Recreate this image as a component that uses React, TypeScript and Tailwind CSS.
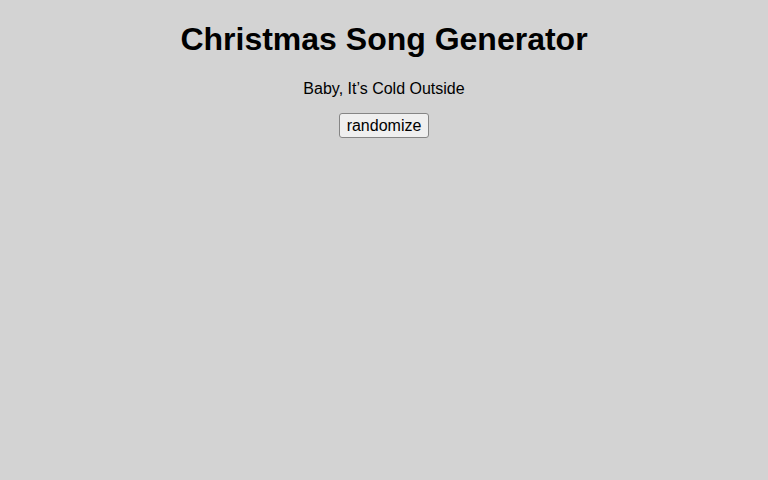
import { useState } from "react";

const SONGS = [
  "Baby, It\u2019s Cold Outside",
  "Jingle Bell Rock",
  "Last Christmas",
  "Silent Night",
  "White Christmas",
  "Let It Snow! Let It Snow! Let It Snow!",
];

export default function App() {
  const [song, setSong] = useState(SONGS[0]);

  const randomize = () => {
    setSong(SONGS[Math.floor(Math.random() * SONGS.length)]);
  };

  return (
    <div className="min-h-screen bg-[#d3d3d3] text-center text-black font-['Liberation_Sans',Arial,sans-serif]">
      <h1 className="pt-[21px] text-[32px] font-bold leading-[37px]">Christmas Song Generator</h1>
      <p className="mt-[22px] text-base leading-[18px]">{song}</p>
      <button
        type="button"
        onClick={randomize}
        className="mt-[15px] rounded-[3px] border border-[#858585] bg-[#efefef] px-[7px] py-[2px] text-base leading-[19px] text-black"
      >
        randomize
      </button>
    </div>
  );
}
